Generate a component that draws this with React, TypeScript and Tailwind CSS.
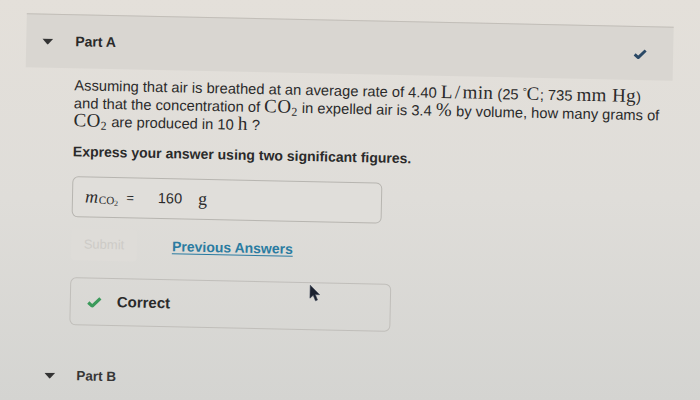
import React from 'react';

function Caret() {
    return (
        <svg width="11" height="6" viewBox="0 0 11 6" className="shrink-0">
            <path d="M0 0 L11 0 L5.5 6 Z" fill="#343434" />
        </svg>
    );
}

function Check({ color, w = 15, h = 11 }: { color: string; w?: number; h?: number }) {
    return (
        <svg width={w} height={h} viewBox="0 0 15 11" className="shrink-0">
            <path d="M1.5 6 L5.5 9.5 L13.5 1.5" fill="none" stroke={color} strokeWidth="3.2" strokeLinejoin="round" />
        </svg>
    );
}

const math = 'font-["Liberation_Serif",serif] text-[19px] tracking-[0.4px]';

export default function App() {
    return (
        <div className='w-[700px] h-[400px] overflow-hidden relative bg-gradient-to-b from-[#e4e0da] via-[#dfddd9] to-[#d4d4d1] font-["Liberation_Sans",Arial,sans-serif] text-[#2a2a2a]'>
            <div className="w-full h-full rotate-[1.2deg] origin-center relative flex flex-col pt-[20px]">
                {/* Part A header */}
                <div className="ml-[23px] w-[647px] h-[54px] border-t border-[#c2beb8] bg-[#d9d6d1] flex items-center pl-[16px] pr-[26px]">
                    <Caret />
                    <span className="ml-[22px] text-[14px] font-bold">Part A</span>
                    <div className="flex-1" />
                    <Check color="#2b4966" w={14} h={10} />
                </div>

                {/* question body */}
                <div className="pl-[72px] flex flex-col items-start">
                    <div className="mt-[7px] text-[14.7px] leading-[18px]">
                        <div className="h-[18px] whitespace-nowrap">
                            Assuming that air is breathed at an average rate of 4.40{' '}
                            <span className={math}>
                                L<span className="mx-[2px]">/</span>min
                            </span>{' '}
                            (25 <sup className="text-[10px] font-['Liberation_Serif',serif]">°</sup>
                            <span className={math}>C</span>; 735 <span className={math}>mm Hg</span>)
                        </div>
                        <div className="h-[18px] whitespace-nowrap">
                            and that the concentration of{' '}
                            <span className={math}>
                                CO<sub className="text-[12px]">2</sub>
                            </span>{' '}
                            in expelled air is 3.4 <span className={math}>%</span> by volume, how many grams of
                        </div>
                        <div className="h-[18px] whitespace-nowrap">
                            <span className={math}>
                                CO<sub className="text-[12px]">2</sub>
                            </span>{' '}
                            are produced in 10 <span className={math}>h</span> ?
                        </div>
                    </div>

                    <div className="mt-[14px] h-[17px] text-[14px] leading-[17px] font-bold">
                        Express your answer using two significant figures.
                    </div>

                    <div className="mt-[16px] w-[310px] h-[41px] rounded-md border border-[#b7b5b0] bg-[#e0deda] flex items-center pl-[12px]">
                        <span className="font-['Liberation_Serif',serif] italic text-[18px]">m</span>
                        <span className="font-['Liberation_Serif',serif] text-[11px] mt-[6px] ml-[1px]">
                            CO<sub className="text-[8px]">2</sub>
                        </span>
                        <span className="ml-[8px] text-[13px]">=</span>
                        <span className="ml-[24px] text-[14.5px]">160</span>
                        <span className="font-['Liberation_Serif',serif] text-[18px] ml-[16px]">g</span>
                    </div>

                    <div className="mt-[11px] h-[32px] flex items-center">
                        <div className="w-[66px] h-[32px] rounded-sm bg-[#dedcd8] flex items-center justify-center text-[13px] text-[#cdcbc7]">
                            Submit
                        </div>
                        <span className="ml-[35px] text-[14px] font-bold text-[#2a7ba1] underline underline-offset-2">
                            Previous Answers
                        </span>
                    </div>

                    <div className="mt-[17px] w-[321px] h-[48px] rounded-md border border-[#c0beba] flex items-center pl-[16px]">
                        <Check color="#3b9a5b" />
                        <span className="ml-[15px] text-[15px] font-bold">Correct</span>
                    </div>
                </div>

                {/* Part B header */}
                <div className="mt-[41px] h-[20px] pl-[48px] flex items-center">
                    <Caret />
                    <span className="ml-[21px] text-[13.5px] font-bold text-[#363636]">Part B</span>
                </div>

                {/* mouse pointer */}
                <svg width="12" height="18" viewBox="0 0 12 18" className="absolute left-[311px] top-[285px]">
                    <path d="M1 1 L1 14 L4.2 11 L6.6 16.5 L8.6 15.6 L6.3 10.3 L10.6 10.3 Z" fill="#1c2230" stroke="#3a4254" strokeWidth="0.6" />
                </svg>
            </div>
        </div>
    );
}
